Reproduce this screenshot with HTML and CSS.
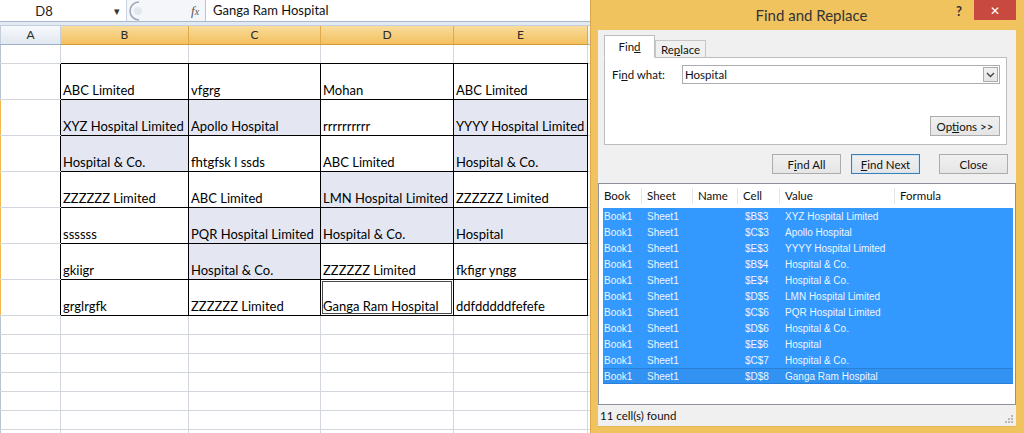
FILE: index.html
```html
<!DOCTYPE html>
<html lang="en">
<head>
  <meta charset="UTF-8">
  <title>Find and Replace</title>
  <link rel="stylesheet" href="styles.css">
</head>
<body>
<div class="screen">
  <div class="sheet">
    <div class="formula-bar">
      <div class="name-box"><span class="ref">D8</span><span class="drop">&#9662;</span></div>
      <div class="bar-mid">
        <svg class="grip" width="14" height="20" viewBox="0 0 14 20"><path d="M11 1 A9 9 0 0 0 11 19" fill="none" stroke="#9aa7b8" stroke-width="1.5"/><circle cx="10" cy="10" r="4" fill="#e2e7ee"/></svg>
        <span class="fx">f<small>x</small></span>
      </div>
      <div class="formula">Ganga Ram Hospital</div>
    </div>
    <div class="band"></div>
    <table class="grid">
      <colgroup><col class="c-a"><col class="c-b"><col class="c-c"><col class="c-d"><col class="c-e"><col class="c-f"></colgroup>
      <tr class="hdr"><th class="ch">A</th><th class="ch sel">B</th><th class="ch sel">C</th><th class="ch sel">D</th><th class="ch sel">E</th><th class="ch">F</th></tr>
      <tr class="r-s"><td class="row-edge"></td><td class="top"></td><td class="top"></td><td class="top"></td><td class="top"></td><td></td></tr>
      <tr class="r-l"><td class="row-edge side"></td><td class="d">ABC Limited</td><td class="d">vfgrg</td><td class="d">Mohan</td><td class="d">ABC Limited</td><td></td></tr>
      <tr class="r-l"><td class="row-edge on side"></td><td class="d hit">XYZ Hospital Limited</td><td class="d hit">Apollo Hospital</td><td class="d">rrrrrrrrrr</td><td class="d hit">YYYY Hospital Limited</td><td></td></tr>
      <tr class="r-l"><td class="row-edge on side"></td><td class="d hit">Hospital &amp; Co.</td><td class="d">fhtgfsk l ssds</td><td class="d">ABC Limited</td><td class="d hit">Hospital &amp; Co.</td><td></td></tr>
      <tr class="r-l"><td class="row-edge on side"></td><td class="d">ZZZZZZ Limited</td><td class="d">ABC Limited</td><td class="d hit">LMN Hospital Limited</td><td class="d">ZZZZZZ Limited</td><td></td></tr>
      <tr class="r-l"><td class="row-edge on side"></td><td class="d">ssssss</td><td class="d hit">PQR Hospital Limited</td><td class="d hit">Hospital &amp; Co.</td><td class="d hit">Hospital</td><td></td></tr>
      <tr class="r-l"><td class="row-edge on side"></td><td class="d">gkiigr</td><td class="d hit">Hospital &amp; Co.</td><td class="d">ZZZZZZ Limited</td><td class="d">fkfigr yngg</td><td></td></tr>
      <tr class="r-l"><td class="row-edge on side"></td><td class="d">grglrgfk</td><td class="d">ZZZZZZ Limited</td><td class="d active">Ganga Ram Hospital</td><td class="d">ddfdddddfefefe</td><td></td></tr>
      <tr class="r-s"><td class="row-edge"></td><td></td><td></td><td></td><td></td><td></td></tr>
      <tr class="r-s"><td class="row-edge"></td><td></td><td></td><td></td><td></td><td></td></tr>
      <tr class="r-s"><td class="row-edge"></td><td></td><td></td><td></td><td></td><td></td></tr>
      <tr class="r-s"><td class="row-edge"></td><td></td><td></td><td></td><td></td><td></td></tr>
      <tr class="r-s"><td class="row-edge"></td><td></td><td></td><td></td><td></td><td></td></tr>
      <tr class="r-s"><td class="row-edge"></td><td></td><td></td><td></td><td></td><td></td></tr>
      <tr class="r-s"><td class="row-edge"></td><td></td><td></td><td></td><td></td><td></td></tr>
    </table>
  </div>

  <div class="dialog">
    <div class="titlebar">
      <span class="title">Find and Replace</span>
      <span class="help">?</span>
      <span class="close">&#10005;</span>
    </div>
    <div class="client">
      <div class="tabs">
        <span class="tab active">Fin<u>d</u></span>
        <span class="tab">Re<u>p</u>lace</span>
      </div>
      <div class="panel">
        <div class="find-row">
          <span class="label">Fi<u>n</u>d what:</span>
          <div class="combo">
            <span class="combo-text">Hospital</span>
            <span class="combo-btn"><svg width="9" height="6" viewBox="0 0 9 6"><path d="M1 1 L4.5 4.5 L8 1" fill="none" stroke="#444" stroke-width="1.4"/></svg></span>
          </div>
        </div>
        <div class="options-row"><button class="btn">Op<u>t</u>ions &gt;&gt;</button></div>
      </div>
      <div class="actions">
        <button class="btn">F<u>i</u>nd All</button>
        <button class="btn default"><u>F</u>ind Next</button>
        <button class="btn close-btn">Close</button>
      </div>
      <div class="results">
        <div class="res-head">
          <span>Book</span><span>Sheet</span><span>Name</span><span>Cell</span><span>Value</span><span>Formula</span>
        </div>
        <div class="res-body">
          <div class="res-row"><span>Book1</span><span>Sheet1</span><span></span><span>$B$3</span><span>XYZ Hospital Limited</span><span></span></div>
          <div class="res-row"><span>Book1</span><span>Sheet1</span><span></span><span>$C$3</span><span>Apollo Hospital</span><span></span></div>
          <div class="res-row"><span>Book1</span><span>Sheet1</span><span></span><span>$E$3</span><span>YYYY Hospital Limited</span><span></span></div>
          <div class="res-row"><span>Book1</span><span>Sheet1</span><span></span><span>$B$4</span><span>Hospital &amp; Co.</span><span></span></div>
          <div class="res-row"><span>Book1</span><span>Sheet1</span><span></span><span>$E$4</span><span>Hospital &amp; Co.</span><span></span></div>
          <div class="res-row"><span>Book1</span><span>Sheet1</span><span></span><span>$D$5</span><span>LMN Hospital Limited</span><span></span></div>
          <div class="res-row"><span>Book1</span><span>Sheet1</span><span></span><span>$C$6</span><span>PQR Hospital Limited</span><span></span></div>
          <div class="res-row"><span>Book1</span><span>Sheet1</span><span></span><span>$D$6</span><span>Hospital &amp; Co.</span><span></span></div>
          <div class="res-row"><span>Book1</span><span>Sheet1</span><span></span><span>$E$6</span><span>Hospital</span><span></span></div>
          <div class="res-row"><span>Book1</span><span>Sheet1</span><span></span><span>$C$7</span><span>Hospital &amp; Co.</span><span></span></div>
          <div class="res-row focus"><span>Book1</span><span>Sheet1</span><span></span><span>$D$8</span><span>Ganga Ram Hospital</span><span></span></div>
        </div>
      </div>
      <div class="status">
        <span>11 cell(s) found</span>
        <svg class="size-grip" width="10" height="10" viewBox="0 0 10 10"><g fill="#b8b8b8"><rect x="7" y="1" width="2" height="2"/><rect x="4" y="4" width="2" height="2"/><rect x="7" y="4" width="2" height="2"/><rect x="1" y="7" width="2" height="2"/><rect x="4" y="7" width="2" height="2"/><rect x="7" y="7" width="2" height="2"/></g></svg>
      </div>
    </div>
  </div>
</div>
</body>
</html>
```

FILE: styles.css
```css
:root {
  --frame: #f0c35f;
  --grid-line: #d2d6dd;
  --hit: #e4e7f2;
  --sel-blue: #3399ff;
  --dlg-bg: #f0f0f0;
}
* {
  box-sizing: border-box;
}
body {
  margin: 0;
  width: 1024px;
  height: 433px;
  overflow: hidden;
  background: #fff;
  font-family: Lato, 'Liberation Sans', sans-serif;
}
.screen {
  display: flex;
  height: 433px;
}

/* spreadsheet side */
.sheet {
  width: 590px;
  overflow: hidden;
  flex: none;
}
.formula-bar {
  display: flex;
  height: 22px;
  border-bottom: 1px solid #a9b8cc;
  background: #f4f6fa;
}
.name-box {
  width: 127px;
  display: flex;
  align-items: center;
  background: #fff;
  border-right: 1px solid #c9d2de;
  font-size: 13px;
  color: #222;
}
.name-box .ref {
  width: 88px;
  text-align: center;
}
.name-box .drop {
  margin-left: 26px;
  font-size: 11px;
  color: #333;
}
.bar-mid {
  width: 78px;
  display: flex;
  align-items: center;
}
.grip {
  margin-left: 1px;
}
.fx {
  margin-left: 49px;
  font-family: 'Liberation Serif', serif;
  font-style: italic;
  font-size: 13px;
  color: #555;
}
.fx small {
  font-size: 10px;
}
.formula {
  flex: 1;
  background: #fff;
  border-left: 1px solid #b7c4d6;
  padding-left: 7px;
  font-size: 13px;
  line-height: 21px;
  color: #111;
}
.band {
  height: 4px;
  background: #e3e9f2;
  border-bottom: 1px solid #c4cfdd;
}

.grid {
  border-collapse: collapse;
  table-layout: fixed;
  width: 626px;
  font-size: 13px;
}
.c-a { width: 60px; }
.c-b { width: 128px; }
.c-c { width: 132px; }
.c-d { width: 133px; }
.c-e { width: 134px; }
.c-f { width: 40px; }
.grid td,
.grid th {
  border: 1px solid var(--grid-line);
  padding: 0 2px 1px;
  vertical-align: bottom;
  white-space: nowrap;
  overflow: hidden;
  color: #000;
}
.grid tr:first-child th {
  border-top: none;
}
.hdr {
  height: 18px;
}
.r-s {
  height: 19px;
}
.r-l {
  height: 36px;
}
.grid .ch {
  font-weight: normal;
  font-size: 12px;
  color: #2b2b2b;
  vertical-align: middle;
  padding: 0;
  background: linear-gradient(#f7f9fc, #e1e7f0);
  border-color: #c5cedb;
  border-bottom-color: #9eb0c8;
}
.grid .ch.sel {
  background: linear-gradient(#f9dc9c, #f3c05e);
  border-color: #e0a94c;
  border-bottom-color: #d69a35;
}
.grid td.row-edge {
  border-left: 1px solid #b9c4d3;
}
.grid td.row-edge.on {
  border-left-color: #f0b94d;
}
.grid td.side {
  border-right-color: #000;
}
.grid td.top {
  border-bottom-color: #000;
}
.grid td.d {
  border-color: #000;
}
.grid td.hit {
  background: var(--hit);
}
.grid td.active {
  box-shadow: inset 0 0 0 1px #fff, inset 0 0 0 2px #4a4a4a;
}

/* find and replace window */
.dialog {
  width: 434px;
  height: 433px;
  flex: none;
  background: var(--frame);
  display: flex;
  flex-direction: column;
  padding: 0 8px 6px;
  border-left: 1px solid #d9a84a;
}
.titlebar {
  height: 30px;
  position: relative;
  display: flex;
  align-items: center;
  justify-content: center;
  flex: none;
}
.title {
  font-size: 15px;
  color: #333;
  margin-left: 8px;
  margin-top: -1px;
}
.help {
  position: absolute;
  right: 54px;
  top: 3px;
  font-size: 13px;
  font-weight: bold;
  color: #333;
}
.close {
  position: absolute;
  right: 0;
  top: 0;
  width: 42px;
  height: 20px;
  background: #c7493f;
  color: #fff;
  font-size: 12px;
  display: flex;
  align-items: center;
  justify-content: center;
}
.client {
  flex: 1;
  background: var(--dlg-bg);
  display: flex;
  flex-direction: column;
  font-size: 11.5px;
  color: #111;
  margin-left: -1px;
}
.tabs {
  display: flex;
  align-items: flex-end;
  height: 28px;
  padding-left: 6px;
  position: relative;
  z-index: 1;
  margin-bottom: -1px;
}
.tab {
  width: 51px;
  height: 18px;
  border: 1px solid #c6c6c6;
  border-bottom: 1px solid #bdbdbd;
  background: #f0f0f0;
  display: flex;
  align-items: center;
  justify-content: center;
}
.tab.active {
  height: 23px;
  background: #fff;
  border-color: #bdbdbd;
  border-bottom-color: #fff;
}
.panel {
  margin: 0 9px 0 6px;
  height: 88px;
  background: #fff;
  border: 1px solid #bdbdbd;
  display: flex;
  flex-direction: column;
  justify-content: space-between;
  padding: 7px 6px 8px 7px;
}
.find-row {
  display: flex;
  align-items: center;
}
.label {
  width: 70px;
}
.combo {
  flex: 1;
  height: 19px;
  border: 1px solid #abadb3;
  display: flex;
  align-items: center;
  justify-content: space-between;
  padding-left: 2px;
}
.combo-btn {
  width: 15px;
  height: 15px;
  margin-right: 1px;
  border: 1px solid #acacac;
  background: linear-gradient(#f2f2f2, #e4e4e4);
  display: flex;
  align-items: center;
  justify-content: center;
}
.options-row {
  display: flex;
  justify-content: flex-end;
}
.btn {
  font-family: Lato, 'Liberation Sans', sans-serif;
  font-size: 11.5px;
  color: #111;
  width: 69px;
  height: 20px;
  padding: 0;
  border: 1px solid #acacac;
  background: linear-gradient(#f0f0f0, #e5e5e5);
}
.options-row .btn {
  width: 70px;
}
.btn.default {
  border-color: #3c7fb1;
  box-shadow: inset 0 0 0 1px #cfe4f6;
}
.actions {
  display: flex;
  justify-content: flex-end;
  gap: 10px;
  margin: 9px 8px 0 0;
}
.actions .close-btn {
  margin-left: 9px;
}
.results {
  margin-top: 9px;
  height: 222px;
  background: #fff;
  border: 1px solid #8e9199;
  display: flex;
  flex-direction: column;
  font-family: 'Liberation Sans', sans-serif;
  font-size: 10px;
}
.res-head {
  display: grid;
  grid-template-columns: 43px 51px 45px 42px 115px 1fr;
  height: 24px;
  align-items: center;
  font-family: Lato, 'Liberation Sans', sans-serif;
  font-size: 11.5px;
}
.res-head span {
  padding-left: 5px;
  border-right: 1px solid #e6e6e6;
  line-height: 16px;
}
.res-head span:last-child {
  border-right: none;
}
.res-body {
  margin: 0 2px 0 4px;
}
.res-row {
  display: grid;
  grid-template-columns: 39px 51px 45px 42px 115px 1fr;
  height: 16px;
  align-items: center;
  background: var(--sel-blue);
  color: #eef5ff;
}
.res-row span {
  padding-left: 5px;
  white-space: nowrap;
}
.res-row span:first-child {
  padding-left: 1px;
}
.res-row span:nth-child(4) {
  padding-left: 7px;
}
.res-row.focus {
  background: #3192f2;
  border-top: 1px solid #2a7fd6;
  border-bottom: 1px solid #2a7fd6;
}
.status {
  flex: 1;
  display: flex;
  align-items: center;
  justify-content: space-between;
  padding: 0 2px 0 2px;
  font-size: 11.5px;
  border-bottom: 1px solid #e2b656;
}
.size-grip {
  align-self: flex-end;
  margin-bottom: 2px;
}
```
